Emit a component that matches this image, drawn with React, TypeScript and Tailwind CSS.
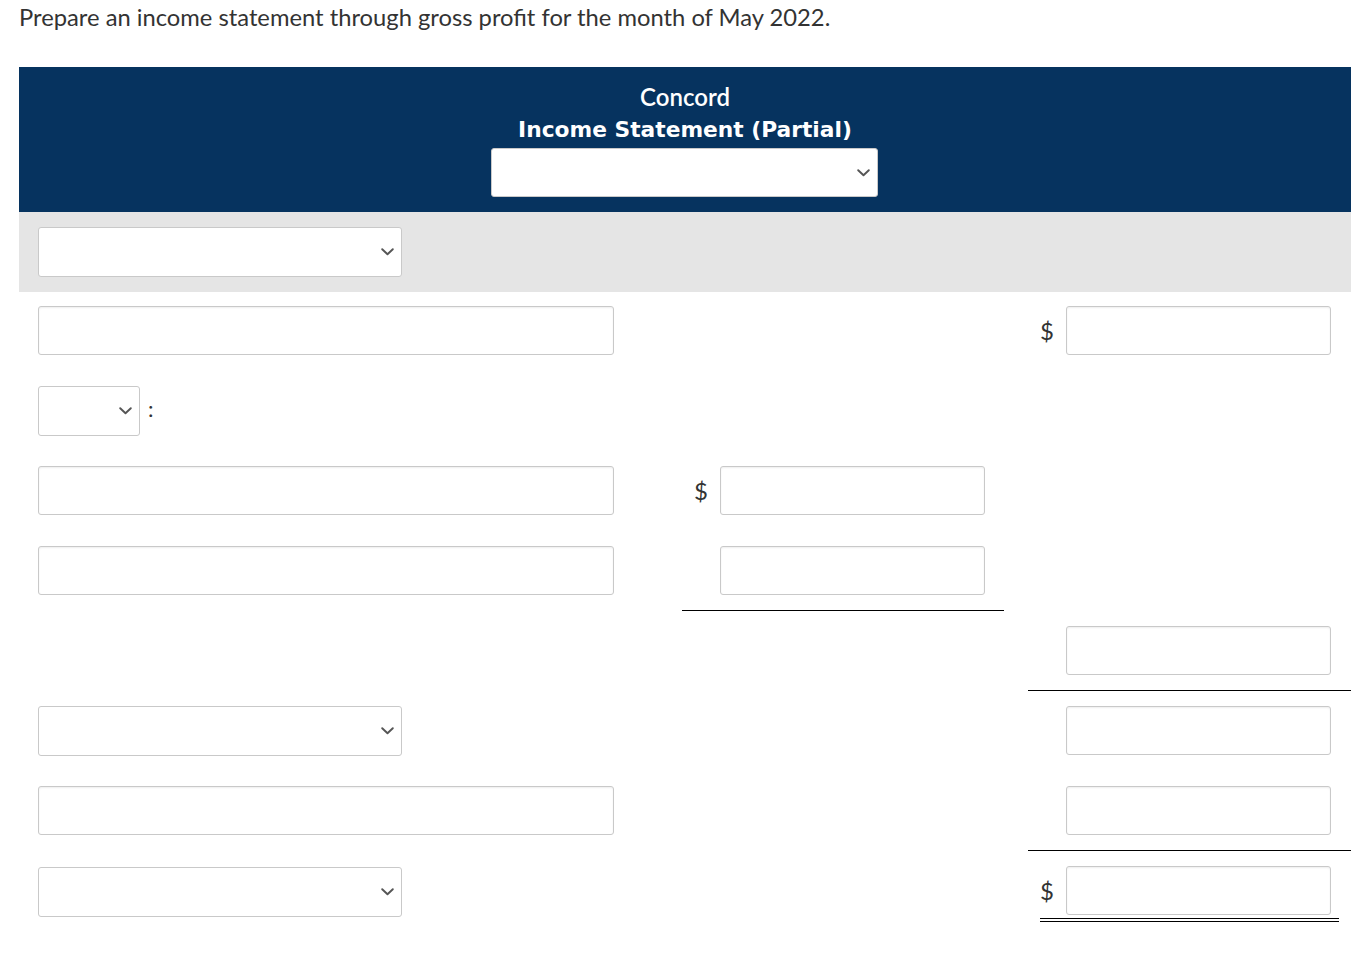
import React from "react";

const inputCls =
  "block h-[49px] bg-white border border-[#c9c9c9] rounded-[3px] shadow-[inset_0_1px_2px_rgba(0,0,0,0.07)] outline-none";

function Chevron() {
  return (
    <svg width="13" height="8" viewBox="0 0 13 8" fill="none">
      <path d="M1.2 1.2 L6.5 6.3 L11.8 1.2" stroke="#555" strokeWidth="1.9" strokeLinecap="round" strokeLinejoin="round" />
    </svg>
  );
}

function Select({ w, h = 50 }: { w: number; h?: number }) {
  return (
    <div
      className="flex items-center justify-end pr-[7px] bg-white border border-[#c9c9c9] rounded-[3px]"
      style={{ width: w, height: h }}
    >
      <Chevron />
    </div>
  );
}

function Input({ w }: { w: number }) {
  return <input type="text" className={inputCls} style={{ width: w }} />;
}

function Money({ dollar, w = 265 }: { dollar?: boolean; w?: number }) {
  return (
    <div className="flex items-center">
      <div className="w-[38px] pr-[12px] text-right text-[24px] leading-[30px] text-[#333]">{dollar ? "$" : ""}</div>
      <Input w={w} />
    </div>
  );
}

function Row({
  c1,
  c2,
  c3,
  u2,
  u3,
}: {
  c1?: React.ReactNode;
  c2?: React.ReactNode;
  c3?: React.ReactNode;
  u2?: boolean;
  u3?: boolean;
}) {
  return (
    <div className="flex h-[80px]">
      <div className="w-[641px] pl-[19px] pt-[14px] flex items-start">{c1}</div>
      <div className="w-[368px]">
        <div className={"ml-[22px] w-[322px] pt-[14px] " + (u2 ? "h-[79px] border-b border-black" : "h-[80px]")}>
          {c2}
        </div>
      </div>
      <div className={"w-[323px] pt-[14px] " + (u3 ? "h-[79px] border-b border-black" : "h-[80px]")}>{c3}</div>
    </div>
  );
}

export default function App() {
  return (
    <div className="bg-white min-h-[970px] font-['Lato','Open_Sans',sans-serif] text-[#333]">
      <div className="ml-[19px] w-[1332px]">
        <div className="h-[67px] pt-[1px] text-[23.75px] leading-[33px] text-[#333]">
          Prepare an income statement through gross profit for the month of May 2022.
        </div>
        <div className="bg-[#06335f] h-[145px] pt-[13px] flex flex-col items-center text-white">
          <div className="text-[24px] leading-[33px] font-semibold">Concord</div>
          <div className="font-['DejaVu_Sans','Verdana',sans-serif] text-[21.75px] leading-[33px] font-bold">
            Income Statement (Partial)
          </div>
          <div className="mt-[2px] pr-[2px]">
            <Select w={387} h={49} />
          </div>
        </div>
        <div className="bg-[#e5e5e5] h-[80px] pl-[19px] pt-[15px]">
          <Select w={364} />
        </div>
        <Row c1={<Input w={576} />} c3={<Money dollar />} />
        <Row
          c1={
            <div className="flex items-center">
              <Select w={102} />
              <span className="ml-[8px] pb-[6px] text-[22px] leading-[33px] text-[#333]">:</span>
            </div>
          }
        />
        <Row c1={<Input w={576} />} c2={<Money dollar />} />
        <Row c1={<Input w={576} />} c2={<Money />} u2 />
        <Row c3={<Money />} u3 />
        <Row c1={<Select w={364} />} c3={<Money />} />
        <Row c1={<Input w={576} />} c3={<Money />} u3 />
        <div className="flex h-[80px]">
          <div className="w-[641px] pl-[19px] pt-[15px]">
            <Select w={364} />
          </div>
          <div className="w-[368px]" />
          <div className="w-[323px] pt-[14px]">
            <Money dollar />
            <div className="ml-[12px] w-[299px] mt-[3px] h-px bg-black" />
            <div className="ml-[12px] w-[299px] mt-[2px] h-px bg-black" />
          </div>
        </div>
      </div>
    </div>
  );
}
